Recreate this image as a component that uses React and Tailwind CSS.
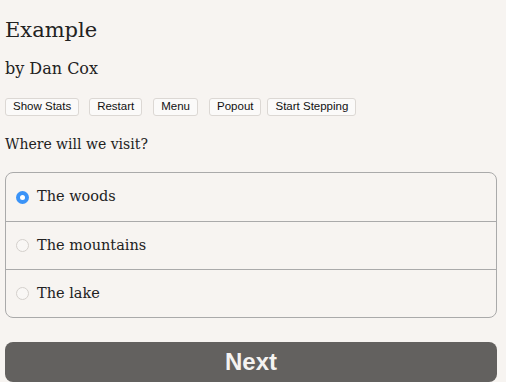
const options = ["The woods", "The mountains", "The lake"];
const tools = [
  { label: "Show Stats", gap: "" },
  { label: "Restart", gap: "ml-[10px]" },
  { label: "Menu", gap: "ml-[11px]" },
  { label: "Popout", gap: "ml-[11px]" },
  { label: "Start Stepping", gap: "ml-[6px]" },
];

const App = () => {
  return (
    <div
      className="min-h-screen bg-[#f7f4f1] text-[#222] pl-[5px] pr-[9px] pt-[14px]"
      style={{ fontFamily: '"DejaVu Serif", Georgia, serif' }}
    >
      <h1 className="text-[21px] leading-[32px]">Example</h1>
      <p className="mt-[12px] text-[16px] leading-[22px]">by Dan Cox</p>

      {/* Toolbar */}
      <div
        className="mt-[18px] flex"
        style={{ fontFamily: '"Liberation Sans", Arial, sans-serif' }}
      >
        {tools.map((t) => (
          <button
            key={t.label}
            className={`h-[18px] px-[7px] text-[11.5px] leading-none bg-[#fbfaf9] border border-[#dcd8d4] rounded-[3px] text-[#111] ${t.gap}`}
          >
            {t.label}
          </button>
        ))}
      </div>

      <p className="mt-[17px] text-[14px] leading-[22px]">Where will we visit?</p>

      {/* Choices */}
      <div className="mt-[17px] border border-[#aaa] rounded-[8px]">
        {options.map((o, i) => (
          <label
            key={o}
            className={`flex items-center h-[48px] pl-[10px] gap-[8px] text-[14.5px] ${
              i > 0 ? "border-t border-[#aaa]" : ""
            }`}
          >
            {i === 0 ? (
              <span className="w-[13px] h-[13px] rounded-full bg-[#3b93f7] flex items-center justify-center">
                <span className="w-[5px] h-[5px] rounded-full bg-white" />
              </span>
            ) : (
              <span className="w-[13px] h-[13px] rounded-full border border-[#d4d0cc] bg-[#f9f7f5]" />
            )}
            <span>{o}</span>
          </label>
        ))}
      </div>

      <button
        className="mt-[24px] w-full h-[40px] rounded-[8px] bg-[#63615f] text-[#f5f3f1] text-[24px] font-bold"
        style={{ fontFamily: '"Liberation Sans", Arial, sans-serif' }}
      >
        Next
      </button>
    </div>
  );
};

export default App;
